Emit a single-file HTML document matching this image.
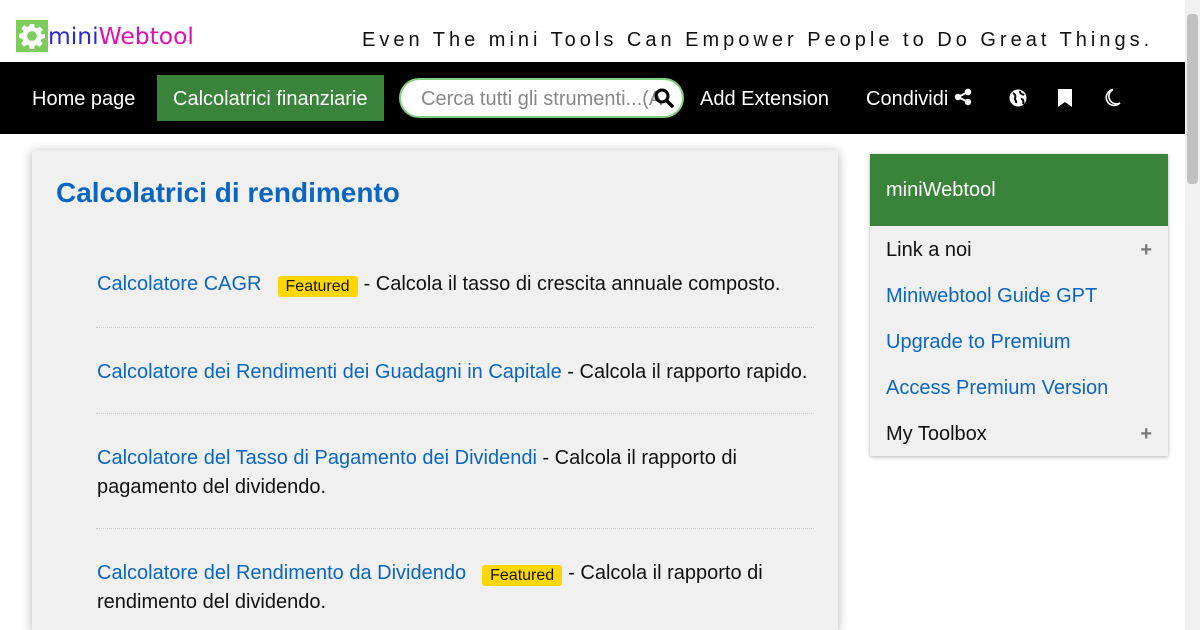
<!DOCTYPE html>
<html style="overflow:hidden"><head><meta charset="utf-8"><style>
*{margin:0;padding:0;box-sizing:border-box}
body{width:1200px;height:630px;overflow:hidden;background:#fff;font-family:"Liberation Sans",sans-serif;position:relative}
.logo{position:absolute;left:16px;top:20px;height:32px;display:flex;align-items:center}
.gear{width:32px;height:32px;background:#7dcc5c;display:flex;align-items:center;justify-content:center}
.logo span{font-family:"DejaVu Sans",sans-serif;font-size:23.4px;line-height:32px}
.tag{position:absolute;left:362px;top:29px;font-size:20px;letter-spacing:4px;color:#111}
.nav{position:absolute;left:0;top:62px;width:1185px;height:72px;background:#000;color:#fff;font-size:20px}
.nav .i{position:absolute;top:1px;line-height:72px}
.green{position:absolute;left:157px;top:13px;width:227px;height:46px;background:#3a833a;line-height:48px;padding-left:16px}
.search{position:absolute;left:399px;top:16px;width:285px;height:40px;background:#fff;border:2px solid #7ed07e;border-radius:20px;color:#888;line-height:38px;padding-left:20px;overflow:hidden;white-space:nowrap}
.sb{position:absolute;right:0;top:0;width:15px;height:630px;background:#f1f1f1}
.sb div{position:absolute;left:2px;top:14px;width:11px;height:170px;background:#c1c1c1;border-radius:4px}
.main{position:absolute;left:32px;top:150px;width:806px;height:480px;background:#f0f0f0;box-shadow:0 2px 10px rgba(0,0,0,.3)}
h1{position:absolute;left:24px;top:27px;font-size:28px;color:#0a66c2;font-weight:bold}
.item{position:absolute;left:65px;width:718px;font-size:20px;line-height:29px;color:#111}
.item a{color:#0a66c2;text-decoration:none}
.hr{position:absolute;left:64px;width:718px;border-top:1px dotted #ccc}
.feat{display:inline-block;background:#ffd700;border-radius:3px;font-size:16px;line-height:21px;padding:0 8px;margin:0 6px 0 16px;vertical-align:-1px}
.side{position:absolute;left:870px;top:154px;width:298px;height:302px;background:#f0f0f0;box-shadow:0 1px 4px rgba(0,0,0,.3)}
.side .h{height:72px;background:#3a833a;color:#fff;font-size:20px;line-height:72px;padding-left:16px}
.side .r{height:46px;line-height:48px;font-size:20px;padding-left:16px;color:#0a66c2;position:relative}
.side .r.k{color:#111}
.side .r b{position:absolute;right:16px;font-weight:bold;color:#777}
</style></head><body>
<div class="logo"><div class="gear"><svg width="26" height="26" viewBox="0 0 24 24"><path fill="#fff" d="M10 1h4l.6 3.1 2 .9 2.6-1.8 2.8 2.8-1.8 2.6.9 2L24 10v4l-3.1.6-.9 2 1.8 2.6-2.8 2.8-2.6-1.8-2 .9L14 24h-4l-.6-3.1-2-.9-2.6 1.8-2.8-2.8 1.8-2.6-.9-2L0 14v-4l3.1-.6.9-2L2.2 4.8 5 2l2.6 1.8 2-.9z"/><circle cx="12" cy="12" r="4.5" fill="#7dcc5c"/></svg></div><span style="color:#2a2ad8">mini</span><span style="color:#e010b0">Webtool</span></div>
<div class="tag">Even The mini Tools Can Empower People to Do Great Things.</div>
<div class="nav">
<div class="i" style="left:32px">Home page</div>
<div class="green">Calcolatrici finanziarie</div>
<div class="search">Cerca tutti gli strumenti...(A<svg style="position:absolute;right:8px;top:8px" width="20" height="20" viewBox="0 0 20 20"><circle cx="8" cy="8" r="6" fill="none" stroke="#000" stroke-width="3"/><path d="M12.5 12.5L18 18" stroke="#000" stroke-width="3.5" stroke-linecap="round"/></svg></div>
<div class="i" style="left:700px">Add Extension</div>
<div class="i" style="left:866px">Condividi <svg width="18" height="18" viewBox="0 0 18 18" style="vertical-align:-1px"><circle cx="14" cy="4" r="3.2" fill="#fff"/><circle cx="4" cy="9" r="3.2" fill="#fff"/><circle cx="14" cy="14" r="3.2" fill="#fff"/><path d="M4 9L14 4M4 9l10 5" stroke="#fff" stroke-width="2"/></svg></div>
<svg class="i" style="left:1009px;top:27px" width="18" height="18" viewBox="0 0 18 18"><circle cx="9" cy="9" r="8.5" fill="#fff"/><path d="M4 4c2 1 3 3 2 5s2 2 1 5M11 2c0 3 2 3 4 4M12 10c2 0 3 2 2 5" stroke="#000" stroke-width="2" fill="none"/></svg>
<svg class="i" style="left:1058px;top:27px" width="14" height="18" viewBox="0 0 14 18"><path d="M0 0h14v18l-7-5-7 5z" fill="#fff"/></svg>
<svg class="i" style="left:1103px;top:26px" width="18" height="20" viewBox="0 0 18 20"><path d="M10 1.5A8 8 0 1 0 17 15 7 7 0 0 1 10 1.5z" fill="none" stroke="#fff" stroke-width="1.6"/></svg>
</div>
<div class="main">
<h1>Calcolatrici di rendimento</h1>
<div class="item" style="top:120px"><a>Calcolatore CAGR</a><span class="feat">Featured</span>- Calcola il tasso di crescita annuale composto.</div>
<div class="hr" style="top:177px"></div>
<div class="item" style="top:208px"><a>Calcolatore dei Rendimenti dei Guadagni in Capitale</a> - Calcola il rapporto rapido.</div>
<div class="hr" style="top:263px"></div>
<div class="item" style="top:294px"><a>Calcolatore del Tasso di Pagamento dei Dividendi</a> - Calcola il rapporto di pagamento del dividendo.</div>
<div class="hr" style="top:378px"></div>
<div class="item" style="top:409px"><a>Calcolatore del Rendimento da Dividendo</a><span class="feat">Featured</span>- Calcola il rapporto di rendimento del dividendo.</div>
</div>
<div class="side">
<div class="h">miniWebtool</div>
<div class="r k">Link a noi<b>+</b></div>
<div class="r">Miniwebtool Guide GPT</div>
<div class="r">Upgrade to Premium</div>
<div class="r">Access Premium Version</div>
<div class="r k">My Toolbox<b>+</b></div>
</div>
<div class="sb"><div></div></div>
</body></html>
